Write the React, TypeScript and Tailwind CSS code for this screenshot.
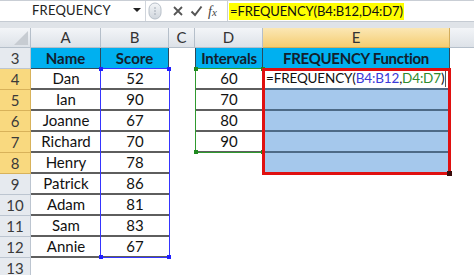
import React from "react";

const names = ["Dan", "Ian", "Joanne", "Richard", "Henry", "Patrick", "Adam", "Sam", "Annie"];
const scores = ["52", "90", "67", "70", "78", "86", "81", "83", "67"];
const intervals = ["60", "70", "80", "90"];

function RowHead({ n, sel }: { n: number; sel: boolean }) {
  return (
    <div
      className={
        "flex items-center justify-center text-[15px] text-[#3a3a3a] border-r border-b " +
        (sel ? "bg-[#f9d97f] border-[#d8b25a]" : "bg-[#e6eaef] border-[#bcc5d0]")
      }
    >
      {n}
    </div>
  );
}

export default function App() {
  const rows = [];
  for (let r = 4; r <= 13; r++) {
    const i = r - 4;
    const inTable = r <= 12;
    rows.push(
      <React.Fragment key={r}>
        <RowHead n={r} sel={r >= 4 && r <= 8} />
        <div
          className={
            "flex items-center justify-center bg-white text-[15px] text-[#111] " +
            (inTable ? "border-b-2 border-[#5e5e5e]" : "")
          }
        >
          {inTable ? names[i] : ""}
        </div>
        <div
          className={
            "flex items-center justify-center bg-white text-[15px] text-[#111] " +
            (inTable ? "border-b-2 border-[#5e5e5e]" : "")
          }
        >
          {inTable ? scores[i] : ""}
        </div>
        <div className="bg-white" />
        <div
          className={
            "flex items-center justify-center bg-white text-[15px] text-[#111] " +
            (r <= 7 ? "border-b-2 border-[#5e5e5e]" : "")
          }
        >
          {r <= 7 ? intervals[i] : ""}
        </div>
        {r === 4 ? (
          <div className="flex items-center bg-white pl-[3px] text-[13.5px] tracking-[-0.15px] text-[#111] border-b-2 border-[#4d6a86] whitespace-nowrap overflow-hidden">
            <span>=FREQUENCY(</span>
            <span className="text-[#3a3ad8]">B4:B12</span>
            <span>,</span>
            <span className="text-[#2e8b2e]">D4:D7</span>
            <span>)</span>
            <span className="ml-[1px] w-[1px] h-[16px] bg-[#555]" />
          </div>
        ) : r <= 8 ? (
          <div className="bg-[#a5c8ec] border-b-2 border-[#4d6a86]" />
        ) : (
          <div className="bg-white" />
        )}
        <div className="bg-white" />
      </React.Fragment>
    );
  }

  return (
    <div
      className="w-[474px] h-[275px] overflow-hidden bg-white relative"
      style={{ fontFamily: "Lato, 'Noto Sans', sans-serif" }}
    >
      {/* Formula bar */}
      <div className="h-[21px] flex border-t border-[#c9ced5] bg-white">
        <div className="w-[145px] flex items-center relative">
          <span className="ml-[32px] text-[13px] text-[#222] tracking-[0.2px]">FREQUENCY</span>
          <span className="absolute left-[133px] top-[7px] w-0 h-0 border-l-[4px] border-r-[4px] border-t-[4px] border-l-transparent border-r-transparent border-t-[#222]" />
        </div>
        <div className="w-[82px] flex items-center border-l border-[#d0d5dc] bg-white">
          <svg width="14" height="18" viewBox="0 0 14 18" className="ml-[2px]">
            <defs>
              <linearGradient id="pl" x1="0" y1="0" x2="0" y2="1">
                <stop offset="0" stopColor="#f4f6f8" />
                <stop offset="1" stopColor="#cfd5dc" />
              </linearGradient>
            </defs>
            <rect x="1" y="1" width="12" height="16" rx="6" fill="url(#pl)" stroke="#b8c0c9" />
            <circle cx="7" cy="6" r="0.8" fill="#9aa3ad" />
            <circle cx="7" cy="9" r="0.8" fill="#9aa3ad" />
            <circle cx="7" cy="12" r="0.8" fill="#9aa3ad" />
          </svg>
          <svg width="12" height="12" viewBox="0 0 12 12" className="ml-[10px]">
            <path d="M2 2 L10 10 M10 2 L2 10" stroke="#555" strokeWidth="1.8" />
          </svg>
          <svg width="13" height="12" viewBox="0 0 13 12" className="ml-[6px]">
            <path d="M1.5 6.5 L5 10 L11.5 1.5" stroke="#555" strokeWidth="2" fill="none" />
          </svg>
          <span
            className="ml-[5px] text-[14px] italic text-[#444]"
            style={{ fontFamily: "'Liberation Serif', serif" }}
          >
            f<span className="text-[11px]">x</span>
          </span>
        </div>
        <div className="flex-1 flex items-center border-l border-[#c9ced5]">
          <span className="ml-[1px] mt-[1px] bg-[#ffff00] px-[1px] h-[17px] flex items-center text-[13px] text-[#111] tracking-[-0.1px]">
            =FREQUENCY(B4:B12,D4:D7)
          </span>
        </div>
      </div>
      {/* Gray band */}
      <div className="h-[7px] bg-[#dfe3e8] border-t border-[#c5cbd3]" />
      {/* Sheet */}
      <div className="relative">
        <div className="grid grid-cols-[31px_70px_68px_26px_68px_187px_24px] grid-rows-[20px_21px_21px_21px_21px_21px_21px_21px_21px_21px_21px_21px]">
          {/* column headers */}
          <div className="relative bg-gradient-to-b from-[#f3f5f8] to-[#dde2e8] border-r border-b border-[#b5bfca]">
            <svg width="14" height="14" className="absolute right-[2px] bottom-[2px]">
              <polygon points="14,0 14,14 0,14" fill="#c7ccd2" />
            </svg>
          </div>
          {["A", "B", "C", "D"].map((c) => (
            <div
              key={c}
              className="flex items-center justify-center text-[15px] text-[#333] bg-gradient-to-b from-[#f3f5f8] to-[#dde2e8] border-r border-b border-[#b5bfca]"
            >
              {c}
            </div>
          ))}
          <div className="flex items-center justify-center text-[15px] text-[#333] bg-gradient-to-b from-[#fbe7b4] to-[#f5cd70] border-r border-b border-[#d3ad5c]">
            E
          </div>
          <div className="bg-gradient-to-b from-[#f3f5f8] to-[#dde2e8] border-b border-[#b5bfca]" />
          {/* row 3 */}
          <RowHead n={3} sel={false} />
          <div className="flex items-center justify-center bg-[#00b0f0] text-[15px] font-bold text-[#13202c] border-r border-[#2c4a5c] border-b border-b-[#2c4a5c]">
            Name
          </div>
          <div className="flex items-center justify-center bg-[#00b0f0] text-[15px] font-bold text-[#13202c] border-r border-[#2c4a5c] border-b border-b-[#2c4a5c]">
            Score
          </div>
          <div className="bg-white" />
          <div className="flex items-center justify-center bg-[#00b0f0] text-[15px] font-bold text-[#13202c] tracking-[-0.2px] border-l border-r border-[#2c4a5c] border-b border-b-[#2c4a5c]">
            Intervals
          </div>
          <div className="flex items-center justify-center bg-[#00b0f0] text-[15px] font-bold text-[#13202c] tracking-[-0.3px] border-r border-[#2c4a5c] border-b border-b-[#2c4a5c]">
            FREQUENCY Function
          </div>
          <div className="bg-white" />
          {rows}
        </div>

        {/* B4:B12 blue range border */}
        <div className="absolute left-[100px] top-[40px] w-[70px] h-[190px] border border-[#3535ff] pointer-events-none">
          <span className="absolute -left-[2px] -top-[2px] w-[4px] h-[4px] bg-[#2020ff]" />
          <span className="absolute -right-[2px] -top-[2px] w-[4px] h-[4px] bg-[#2020ff]" />
          <span className="absolute -left-[2px] -bottom-[2px] w-[4px] h-[4px] bg-[#2020ff]" />
          <span className="absolute -right-[2px] -bottom-[2px] w-[4px] h-[4px] bg-[#2020ff]" />
        </div>
        {/* D4:D7 green range border */}
        <div className="absolute left-[195px] top-[40px] w-[69px] h-[85px] border border-[#2f9a2f] pointer-events-none">
          <span className="absolute -left-[2px] -top-[2px] w-[4px] h-[4px] bg-[#1f8a1f]" />
          <span className="absolute -right-[2px] -top-[2px] w-[4px] h-[4px] bg-[#1f8a1f]" />
          <span className="absolute -left-[2px] -bottom-[2px] w-[4px] h-[4px] bg-[#1f8a1f]" />
          <span className="absolute -right-[2px] -bottom-[2px] w-[4px] h-[4px] bg-[#1f8a1f]" />
        </div>
        {/* E4:E8 red selection */}
        <div className="absolute left-[262px] top-[40px] w-[189px] h-[107px] border-[3px] border-[#e01010] pointer-events-none">
          <span className="absolute -right-[4px] -bottom-[4px] w-[5px] h-[5px] bg-[#3a0c0c]" />
        </div>
      </div>
    </div>
  );
}
